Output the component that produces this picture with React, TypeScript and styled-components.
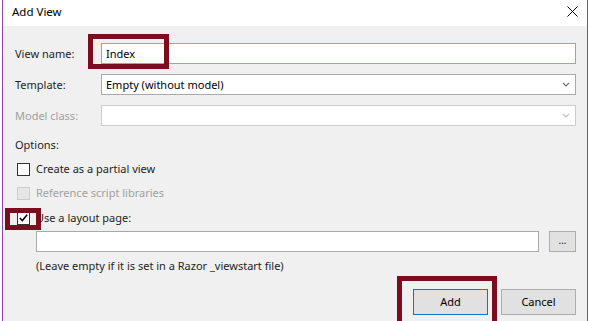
import React from 'react';
import styled, { createGlobalStyle } from 'styled-components';

const GlobalStyle = createGlobalStyle`
  *, *::before, *::after {
    box-sizing: border-box;
  }
  html, body {
    margin: 0;
    padding: 0;
    background: #ffffff;
  }
  body {
    font-family: 'Segoe UI', 'Noto Sans', 'Liberation Sans', sans-serif;
    font-size: 11px;
    line-height: 16px;
    color: #1e1e1e;
  }
`;

const maroon = '#7b0d1e';

const Page = styled.div`
  width: 589px;
  height: 321px;
  overflow: hidden;
  background: #ffffff;
  padding-left: 2px;
`;

const Dialog = styled.div`
  width: 586px;
  height: 321px;
  border-left: 1px solid #8e44ad;
  border-right: 1px solid #8e44ad;
  display: flex;
  flex-direction: column;
`;

const TitleBar = styled.div`
  height: 26px;
  flex-shrink: 0;
  background: #ffffff;
  display: flex;
  align-items: center;
  justify-content: space-between;
  padding: 0 9px 3px 9px;
`;

const Title = styled.span`
  font-size: 11.5px;
  color: #000;
`;

const Body = styled.div`
  flex: 1;
  background: #f0f0f0;
  padding: 17px 11px 0 12px;
  display: flex;
  flex-direction: column;
`;

const FormGrid = styled.div`
  display: grid;
  grid-template-columns: 86px 1fr;
  row-gap: 10px;
  align-items: center;
`;

const Label = styled.span<{ $disabled?: boolean }>`
  color: ${(p) => (p.$disabled ? '#a0a0a0' : '#1e1e1e')};
  white-space: nowrap;
`;

const Anchor = styled.div`
  position: relative;
`;

const Highlight = styled.div<{ $l: number; $t: number; $w: number; $h: number }>`
  position: absolute;
  left: ${(p) => p.$l}px;
  top: ${(p) => p.$t}px;
  width: ${(p) => p.$w}px;
  height: ${(p) => p.$h}px;
  border: 5px solid ${maroon};
  pointer-events: none;
`;

const TextBox = styled.div<{ $focused?: boolean }>`
  height: 21px;
  background: #ffffff;
  border: 1px solid ${(p) => (p.$focused ? '#7aaed6' : '#a9a9a9')};
  display: flex;
  align-items: center;
  padding-left: 4px;
  color: #000;
`;

const Select = styled(TextBox)<{ $disabled?: boolean }>`
  justify-content: space-between;
  border-color: ${(p) => (p.$disabled ? '#cccccc' : '#a9a9a9')};
  padding-right: 5px;
`;

const Section = styled.div`
  margin-top: 11px;
  display: flex;
  flex-direction: column;
`;

const CheckRow = styled.label<{ $disabled?: boolean; $gap?: number }>`
  display: flex;
  align-items: center;
  gap: 6px;
  height: 16px;
  margin-top: ${(p) => p.$gap ?? 8}px;
  margin-left: 2px;
  color: ${(p) => (p.$disabled ? '#a0a0a0' : '#1e1e1e')};
`;

const Box = styled.span<{ $disabled?: boolean }>`
  width: 13px;
  height: 13px;
  border: 1px solid ${(p) => (p.$disabled ? '#cccccc' : '#333333')};
  background: ${(p) => (p.$disabled ? '#e6e6e6' : '#ffffff')};
  display: flex;
  align-items: center;
  justify-content: center;
`;

const LayoutRow = styled.div`
  display: flex;
  gap: 10px;
  margin: 5px 0 0 21px;
`;

const LayoutInput = styled(TextBox)`
  flex: 1;
`;

const BrowseButton = styled.div`
  width: 27px;
  height: 21px;
  background: #e1e1e1;
  border: 1px solid #adadad;
  display: flex;
  align-items: center;
  justify-content: center;
  font-size: 10px;
  padding-bottom: 4px;
`;

const Hint = styled.div`
  margin: 6px 0 0 21px;
  color: #1e1e1e;
`;

const Footer = styled.div`
  margin-top: 15px;
  display: flex;
  justify-content: flex-end;
  gap: 13px;
`;

const Button = styled.div<{ $primary?: boolean }>`
  width: 75px;
  height: 26px;
  background: #e1e1e1;
  border: 1px solid ${(p) => (p.$primary ? '#0078d7' : '#adadad')};
  display: flex;
  align-items: center;
  justify-content: center;
  color: #000;
`;

const Chevron = ({ color }: { color: string }) => (
  <svg width="8" height="5" viewBox="0 0 8 5">
    <path d="M1 1 L4 4 L7 1" fill="none" stroke={color} strokeWidth="1.2" />
  </svg>
);

const CloseIcon = () => (
  <svg width="11" height="11" viewBox="0 0 11 11">
    <path d="M0.5 0.5 L10.5 10.5 M10.5 0.5 L0.5 10.5" stroke="#000" strokeWidth="1" />
  </svg>
);

const Check = () => (
  <svg width="9" height="8" viewBox="0 0 9 8">
    <path d="M0.8 4 L3.3 6.6 L8.2 0.8" fill="none" stroke="#000" strokeWidth="1.5" />
  </svg>
);

export default function App() {
  return (
    <>
      <GlobalStyle />
      <Page>
        <Dialog>
          <TitleBar>
            <Title>Add View</Title>
            <CloseIcon />
          </TitleBar>
          <Body>
            <FormGrid>
              <Label>View name:</Label>
              <Anchor>
                <TextBox $focused>Index</TextBox>
                <Highlight $l={-13} $t={-9} $w={81} $h={35} />
              </Anchor>
              <Label>Template:</Label>
              <Select>
                <span>Empty (without model)</span>
                <Chevron color="#707070" />
              </Select>
              <Label $disabled>Model class:</Label>
              <Select $disabled>
                <span />
                <Chevron color="#c0c0c0" />
              </Select>
            </FormGrid>
            <Section>
              <Label>Options:</Label>
              <CheckRow>
                <Box />
                Create as a partial view
              </CheckRow>
              <CheckRow $disabled>
                <Box $disabled />
                Reference script libraries
              </CheckRow>
              <CheckRow $gap={9}>
                <Anchor>
                  <Box>
                    <Check />
                  </Box>
                  <Highlight $l={-12} $t={-4} $w={36} $h={22} />
                </Anchor>
                Use a layout page:
              </CheckRow>
              <LayoutRow>
                <LayoutInput />
                <BrowseButton>...</BrowseButton>
              </LayoutRow>
              <Hint>(Leave empty if it is set in a Razor _viewstart file)</Hint>
            </Section>
            <Footer>
              <Anchor>
                <Button $primary>Add</Button>
                <Highlight $l={-16} $t={-13} $w={100} $h={52} />
              </Anchor>
              <Button>Cancel</Button>
            </Footer>
          </Body>
        </Dialog>
      </Page>
    </>
  );
}
